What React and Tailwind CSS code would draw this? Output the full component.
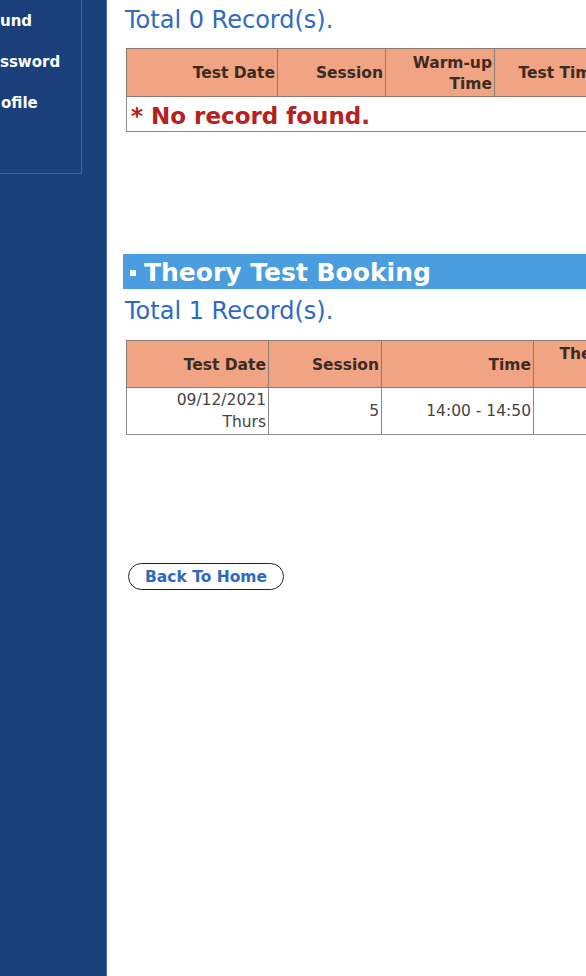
import React from 'react';

const font = { fontFamily: '"DejaVu Sans", Verdana, sans-serif' };

function HeadCell({ children, w }) {
  return (
    <th
      className={`border border-[#8a7a70] bg-[#f0a484] px-[2px] pt-[2px] text-right align-middle text-[15.5px] font-bold leading-[21px] text-[#3b2b22] ${w}`}
    >
      {children}
    </th>
  );
}

export default function App() {
  return (
    <div className="flex min-h-[976px] w-[586px] overflow-hidden bg-white" style={font}>
      {/* sidebar */}
      <aside className="relative w-[107px] shrink-0 border-r border-[#4a74b4] bg-[#1b3f7a]">
        <div className="h-[174px] w-[82px] border-b border-r border-[#3d62a0]">
          <ul className="flex flex-col gap-[21px] pt-[11px] text-[15px] font-bold leading-[20px] text-white">
            <li>und</li>
            <li>ssword</li>
            <li className="pl-[1px]">ofile</li>
          </ul>
        </div>
      </aside>

      {/* main */}
      <main className="min-w-0 flex-1 pl-[16px]">
        <div className="pl-[2px] pt-[6px] text-[24px] leading-[29px] text-[#2e6ac1]">Total 0 Record(s).</div>

        <table className="ml-[3px] mt-[13px] w-[700px] table-fixed border-collapse">
          <thead>
            <tr className="h-[48px]">
              <HeadCell w="w-[151px]">Test Date</HeadCell>
              <HeadCell w="w-[108px]">Session</HeadCell>
              <HeadCell w="w-[109px]">Warm-up Time</HeadCell>
              <HeadCell w="w-[110px]">Test Time</HeadCell>
              <HeadCell>Result</HeadCell>
            </tr>
          </thead>
          <tbody>
            <tr className="h-[35px]">
              <td colSpan={5} className="border border-[#8a8a8a] px-[4px] pt-[3px] text-[23px] font-bold leading-[30px] text-[#b52020]">
                * No record found.
              </td>
            </tr>
          </tbody>
        </table>

        <h2 className="mt-[122px] flex h-[35px] items-center gap-[8px] bg-[#4a9ddf] pl-[7px] pt-[2px] text-[25px] font-bold leading-[30px] text-white">
          <span className="h-[6px] w-[6px] bg-white" />
          Theory Test Booking
        </h2>

        <div className="pl-[2px] pt-[8px] text-[24px] leading-[29px] text-[#2e6ac1]">Total 1 Record(s).</div>

        <table className="ml-[3px] mt-[14px] w-[700px] table-fixed border-collapse">
          <thead>
            <tr className="h-[47px]">
              <HeadCell w="w-[142px]">Test Date</HeadCell>
              <HeadCell w="w-[113px]">Session</HeadCell>
              <HeadCell w="w-[152px]">Time</HeadCell>
              <HeadCell w="w-[130px]">Theory Test Venue</HeadCell>
              <HeadCell>Status</HeadCell>
            </tr>
          </thead>
          <tbody>
            <tr className="h-[47px] text-[15.5px] leading-[22px] text-[#444]">
              <td className="border border-[#8a8a8a] px-[2px] text-right align-middle">
                09/12/2021
                <br />
                Thurs
              </td>
              <td className="border border-[#8a8a8a] px-[2px] text-right align-middle">5</td>
              <td className="border border-[#8a8a8a] px-[2px] text-right align-middle">14:00 - 14:50</td>
              <td className="border border-[#8a8a8a] px-[2px]" />
              <td className="border border-[#8a8a8a] px-[2px]" />
            </tr>
          </tbody>
        </table>

        <button className="ml-[5px] mt-[128px] h-[27px] w-[156px] rounded-full border-[1.5px] border-[#222] bg-white text-[15.5px] font-bold leading-[20px] text-[#2e6ac1]">
          Back To Home
        </button>
      </main>
    </div>
  );
}
